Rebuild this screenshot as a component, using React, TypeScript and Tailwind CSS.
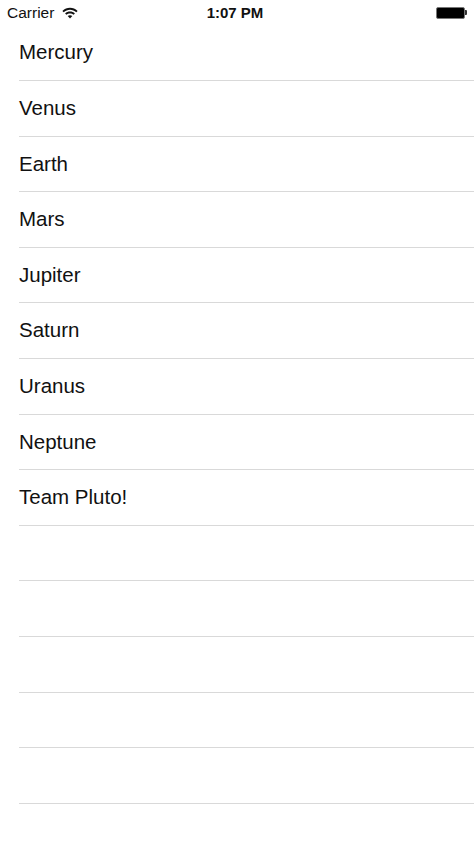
const planets = ['Mercury', 'Venus', 'Earth', 'Mars', 'Jupiter', 'Saturn', 'Uranus', 'Neptune', 'Team Pluto!', '', '', '', '', ''];

const WifiIcon = () => (
  <svg width="16" height="12" viewBox="0 0 16 12" className="ml-[8px]">
    <path d="M0.4 3.9C4.6 -0.3 11.4 -0.3 15.6 3.9L14.3 5.2C10.8 1.8 5.2 1.8 1.7 5.2Z" fill="#111" />
    <path d="M3.1 6.5C5.8 3.9 10.2 3.9 12.9 6.5L11.6 7.8C9.6 5.9 6.4 5.9 4.4 7.8Z" fill="#111" />
    <path d="M5.7 9.1C7 7.9 9 7.9 10.3 9.1L8 11.5Z" fill="#111" />
  </svg>
);

const Battery = () => (
  <div className="flex items-center">
    <div className="w-[29px] h-[12px] rounded-[2px] bg-black border border-[#777]" />
    <div className="w-[2px] h-[5px] bg-[#333] rounded-r-[1px]" />
  </div>
);

export default function App() {
  return (
    <div className="h-[843px] overflow-hidden bg-white font-['Liberation_Sans',Arial,sans-serif] text-black">
      <div className="h-[25.5px] relative flex items-center justify-between pl-[7px] pr-[7px]">
        <div className="flex items-center text-[15.5px] text-[#111]">
          Carrier
          <WifiIcon />
        </div>
        <div className="absolute left-0 right-[4px] text-center text-[15px] font-bold text-[#111]">1:07 PM</div>
        <Battery />
      </div>
      <ul>
        {planets.map((name, i) => (
          <li key={i} className="h-[55.6px] ml-[19px] flex items-center border-b border-[#d9d9d9] text-[20.5px] text-[#111]">
            {name}
          </li>
        ))}
      </ul>
    </div>
  );
}
